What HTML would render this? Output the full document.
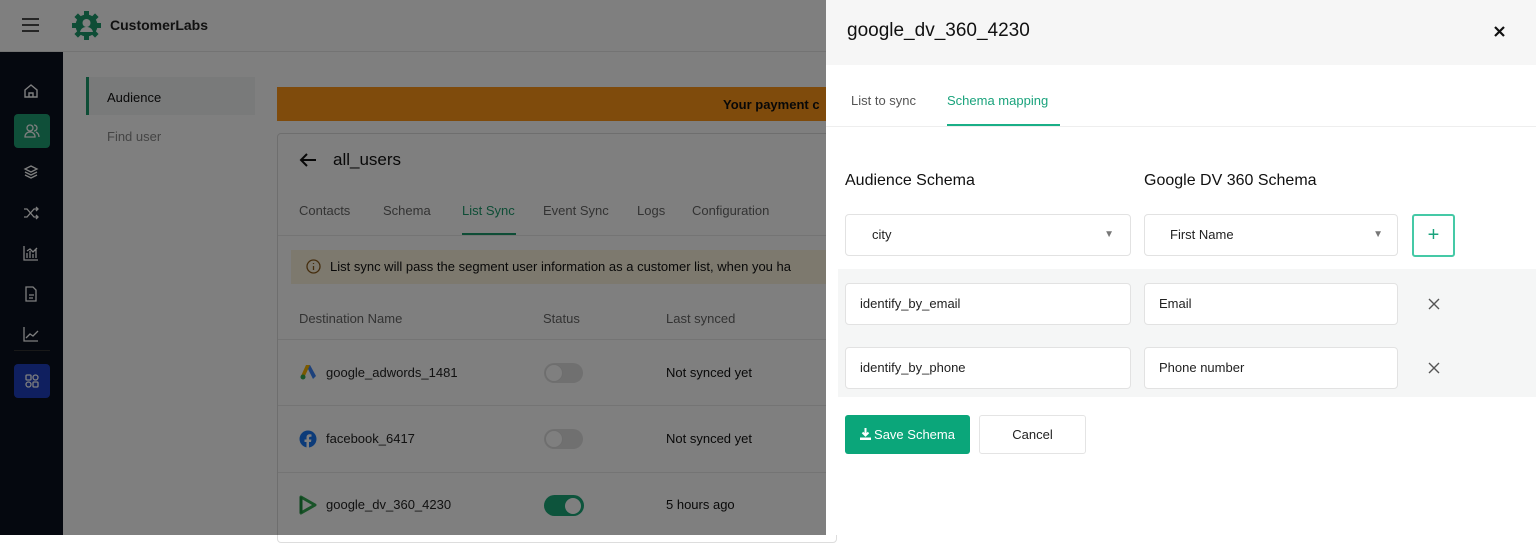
<!DOCTYPE html>
<html><head><meta charset="utf-8">
<style>
*{box-sizing:border-box;margin:0;padding:0}
body{width:1536px;height:535px;overflow:hidden;font-family:"Liberation Sans",sans-serif;background:#fff;position:relative;color:#222}
.abs{position:absolute}
.top{left:0;top:0;width:1536px;height:52px;background:#fff;border-bottom:1px solid #e6e6e6}
.side{left:0;top:52px;width:63px;height:483px;background:#0a101e}
.ico{position:absolute;left:14px;width:36px;height:34px;border-radius:4px;display:flex;align-items:center;justify-content:center}
.main{left:64px;top:52px;width:1472px;height:483px;background:#fff}
.t{position:absolute;white-space:nowrap}
.overlay{left:0;top:0;width:826px;height:535px;background:rgba(0,0,0,.5)}
.drawer{left:826px;top:0;width:710px;height:535px;background:#fff}
.inp{position:absolute;height:42px;background:#fff;border:1px solid #e2e2e2;border-radius:4px;font-size:13px;color:#222;padding-left:14px;line-height:40px}
</style></head><body>
<div class="abs top"></div>
<!-- hamburger -->
<svg class="abs" style="left:22px;top:17px" width="17" height="16"><path d="M0 2h17M0 8h17M0 14h17" stroke="#333" stroke-width="1.8"/></svg>
<svg class="abs" style="left:70px;top:9px" width="33" height="33" viewBox="0 0 33 33"><g fill="#1d9a6c"><circle cx="16.5" cy="16.5" r="11"/><g stroke="#1d9a6c" stroke-width="5"><path d="M16.5 2v29M2 16.5h29M6.2 6.2l20.6 20.6M26.8 6.2L6.2 26.8"/></g></g><circle cx="16.5" cy="14" r="4" fill="#fff"/><path d="M10 23c1-4 4-5 6.5-5s5.5 1 6.5 5z" fill="#fff"/></svg>
<div class="t" style="left:110px;top:17px;font-size:14px;font-weight:bold;color:#222">CustomerLabs</div>

<div class="abs side">
 <svg class="abs" style="left:23px;top:31px" width="16" height="16" viewBox="0 0 16 16" fill="none" stroke="#fff" stroke-width="1.4"><path d="M2 7l6-5 6 5v7H2z M6 14v-4h4v4"/></svg>
 <div class="ico" style="top:62px;background:#1e9e72"><svg width="16" height="16" viewBox="0 0 16 16" fill="none" stroke="#fff" stroke-width="1.3"><circle cx="6" cy="5" r="3"/><path d="M1 14c0-3 2-5 5-5s5 2 5 5z"/><path d="M10 2a3 3 0 010 6M12 9c2 1 3 3 3 5"/></svg></div>
 <svg class="abs" style="left:23px;top:112px" width="16" height="16" viewBox="0 0 16 16" fill="none" stroke="#fff" stroke-width="1.3"><path d="M8 2l6 3-6 3-6-3z M2 8l6 3 6-3 M2 11l6 3 6-3"/></svg>
 <svg class="abs" style="left:23px;top:153px" width="16" height="16" viewBox="0 0 16 16" fill="none" stroke="#fff" stroke-width="1.3"><path d="M1 4h3l7 8h4M1 12h3l7-8h4M13 2l2 2-2 2M13 10l2 2-2 2"/></svg>
 <svg class="abs" style="left:23px;top:193px" width="16" height="16" viewBox="0 0 16 16" fill="none" stroke="#fff" stroke-width="1.3"><path d="M1 1v14h14M4 13V8M7 13V6M10 13V9M13 13V4M4 6l3-2 3 3 4-4"/></svg>
 <svg class="abs" style="left:23px;top:234px" width="16" height="16" viewBox="0 0 16 16" fill="none" stroke="#fff" stroke-width="1.3"><path d="M3 1h7l3 3v11H3z M6 9h5M6 12h4"/></svg>
 <svg class="abs" style="left:23px;top:274px" width="16" height="16" viewBox="0 0 16 16" fill="none" stroke="#fff" stroke-width="1.3"><path d="M1 1v14h14M3 12l4-4 3 2 5-5"/></svg>
 <div class="abs" style="left:14px;top:298px;width:36px;height:1px;background:#333"></div>
 <div class="ico" style="top:312px;background:#1f3fbf"><svg width="16" height="16" viewBox="0 0 16 16" fill="none" stroke="#fff" stroke-width="1.3"><rect x="2" y="2" width="5" height="5" rx="1"/><rect x="9" y="2" width="5" height="5" rx="2.5"/><rect x="2" y="9" width="5" height="5" rx="2.5"/><rect x="9" y="9" width="5" height="5" rx="1"/></svg></div>
</div>

<div class="abs main"></div>
<div class="abs" style="left:86px;top:77px;width:169px;height:38px;background:#f2f4f5;border-left:3px solid #1d9a6c"></div>
<div class="t" style="left:107px;top:90px;font-size:13px;color:#111">Audience</div>
<div class="t" style="left:107px;top:129px;font-size:13px;color:#888">Find user</div>
<div class="abs" style="left:277px;top:87px;width:560px;height:34px;background:#fe9619"></div>
<div class="t" style="left:723px;top:97px;font-size:13px;font-weight:bold;color:#111">Your payment c</div>
<div class="abs" style="left:277px;top:133px;width:560px;height:410px;background:#fff;border:1px solid #ddd;border-radius:4px"></div>
<svg class="abs" style="left:299px;top:152px" width="18" height="16" viewBox="0 0 18 16" fill="none" stroke="#111" stroke-width="2"><path d="M17 8H2M8 2L2 8l6 6"/></svg>
<div class="t" style="left:333px;top:150px;font-size:17px;color:#111">all_users</div>
<div class="t" style="left:299px;top:203px;font-size:13px;color:#666">Contacts</div>
<div class="t" style="left:383px;top:203px;font-size:13px;color:#666">Schema</div>
<div class="t" style="left:462px;top:203px;font-size:13px;color:#1d9a6c">List Sync</div>
<div class="t" style="left:543px;top:203px;font-size:13px;color:#666">Event Sync</div>
<div class="t" style="left:637px;top:203px;font-size:13px;color:#666">Logs</div>
<div class="t" style="left:692px;top:203px;font-size:13px;color:#666">Configuration</div>
<div class="abs" style="left:462px;top:233px;width:54px;height:3px;background:#1d9a6c"></div>
<div class="abs" style="left:278px;top:235px;width:560px;height:1px;background:#e8e8e8"></div>
<div class="abs" style="left:291px;top:250px;width:546px;height:34px;background:#fbf3dd"></div>
<svg class="abs" style="left:306px;top:259px" width="15" height="15" viewBox="0 0 15 15" fill="none" stroke="#8a5a1a" stroke-width="1.3"><circle cx="7.5" cy="7.5" r="6.5"/><path d="M7.5 7v4M7.5 4v1"/></svg>
<div class="t" style="left:330px;top:259px;font-size:13px;color:#111">List sync will pass the segment user information as a customer list, when you ha</div>
<div class="t" style="left:299px;top:311px;font-size:13px;color:#666">Destination Name</div>
<div class="t" style="left:543px;top:311px;font-size:13px;color:#666">Status</div>
<div class="t" style="left:666px;top:311px;font-size:13px;color:#666">Last synced</div>
<div class="abs" style="left:278px;top:339px;width:560px;height:1px;background:#e8e8e8"></div>
<div class="abs" style="left:278px;top:405px;width:560px;height:1px;background:#e8e8e8"></div>
<div class="abs" style="left:278px;top:472px;width:560px;height:1px;background:#e8e8e8"></div>
<svg class="abs" style="left:299px;top:364px" width="18" height="16" viewBox="0 0 18 16"><path d="M7 1h4l6 11-3 3z" fill="#3b82f6"/><path d="M7 1l4 0-6 13-3-2z" fill="#f6b400"/><circle cx="4" cy="13" r="2.5" fill="#34a853"/></svg>
<div class="t" style="left:326px;top:365px;font-size:13px;color:#222">google_adwords_1481</div>
<svg class="abs" style="left:299px;top:430px" width="18" height="18" viewBox="0 0 18 18"><circle cx="9" cy="9" r="8.5" fill="#1877f2"/><path d="M10 18v-6h2l.4-2.5H10V8c0-.7.3-1.3 1.4-1.3h1.1V4.5S11.5 4.3 10.6 4.3C8.7 4.3 7.5 5.4 7.5 7.6v1.9H5.5V12h2v6z" fill="#fff"/></svg>
<div class="t" style="left:326px;top:431px;font-size:13px;color:#222">facebook_6417</div>
<svg class="abs" style="left:299px;top:495px" width="18" height="20" viewBox="0 0 18 20"><path d="M2 2l14 8-14 8z" fill="none" stroke="#34a853" stroke-width="3" stroke-linejoin="round"/><path d="M2 2v16" stroke="#1e8e3e" stroke-width="3"/></svg>
<div class="t" style="left:326px;top:497px;font-size:13px;color:#222">google_dv_360_4230</div>
<div class="abs" style="left:544px;top:363px;width:39px;height:20px;border-radius:10px;background:#e0e0e0"></div>
<div class="abs" style="left:545px;top:364px;width:18px;height:18px;border-radius:9px;background:#fff;border:1px solid #ddd"></div>
<div class="abs" style="left:544px;top:429px;width:39px;height:20px;border-radius:10px;background:#e0e0e0"></div>
<div class="abs" style="left:545px;top:430px;width:18px;height:18px;border-radius:9px;background:#fff;border:1px solid #ddd"></div>
<div class="abs" style="left:544px;top:495px;width:40px;height:21px;border-radius:11px;background:#1aa878"></div>
<div class="abs" style="left:565px;top:498px;width:16px;height:16px;border-radius:8px;background:#fff"></div>
<div class="t" style="left:666px;top:365px;font-size:13px;color:#111">Not synced yet</div>
<div class="t" style="left:666px;top:431px;font-size:13px;color:#111">Not synced yet</div>
<div class="t" style="left:666px;top:497px;font-size:13px;color:#111">5 hours ago</div>

<div class="abs overlay"></div>

<div class="abs drawer">
 <div class="abs" style="left:0;top:0;width:710px;height:65px;background:#f6f6f6"></div>
 <div class="t" style="left:21px;top:20px;font-size:19px;color:#111">google_dv_360_4230</div>
 <svg class="abs" style="left:668px;top:26px" width="11" height="11" viewBox="0 0 11 11"><path d="M1 1l9 9M10 1l-9 9" stroke="#111" stroke-width="2.2"/></svg>
 <div class="t" style="left:25px;top:93px;font-size:13px;color:#555">List to sync</div>
 <div class="t" style="left:121px;top:93px;font-size:13px;color:#1aa37c">Schema mapping</div>
 <div class="abs" style="left:121px;top:124px;width:113px;height:3px;background:#1aaf87"></div>
 <div class="abs" style="left:0;top:126px;width:710px;height:1px;background:#eee"></div>
 <div class="t" style="left:19px;top:172px;font-size:16px;color:#111">Audience Schema</div>
 <div class="t" style="left:318px;top:172px;font-size:16px;color:#111">Google DV 360 Schema</div>
 <div class="inp" style="left:19px;top:214px;width:286px;padding-left:26px">city<span style="position:absolute;right:16px;top:0;font-size:10px;color:#777">&#9660;</span></div>
 <div class="inp" style="left:318px;top:214px;width:254px;padding-left:25px">First Name<span style="position:absolute;right:14px;top:0;font-size:10px;color:#777">&#9660;</span></div>
 <div class="abs" style="left:586px;top:214px;width:43px;height:43px;border:2px solid #45c9a6;border-radius:3px;color:#1aa37c;font-size:20px;text-align:center;line-height:38px">+</div>
 <div class="abs" style="left:12px;top:269px;width:698px;height:128px;background:#f5f6f6"></div>
 <div class="inp" style="left:19px;top:283px;width:286px">identify_by_email</div>
 <div class="inp" style="left:318px;top:283px;width:254px">Email</div>
 <svg class="abs" style="left:602px;top:298px" width="12" height="12" viewBox="0 0 12 12"><path d="M1 1l10 10M11 1L1 11" stroke="#555" stroke-width="1.4"/></svg>
 <div class="inp" style="left:19px;top:347px;width:286px">identify_by_phone</div>
 <div class="inp" style="left:318px;top:347px;width:254px">Phone number</div>
 <svg class="abs" style="left:602px;top:362px" width="12" height="12" viewBox="0 0 12 12"><path d="M1 1l10 10M11 1L1 11" stroke="#555" stroke-width="1.4"/></svg>
 <div class="abs" style="left:19px;top:415px;width:125px;height:39px;background:#0ba67a;border-radius:3px;color:#fff;font-size:13px;line-height:39px;text-align:center"><svg width="11" height="12" viewBox="0 0 11 12" style="vertical-align:-1px;margin-right:3px"><path d="M5.5 0v7M2.5 4.5l3 3 3-3" stroke="#fff" stroke-width="2" fill="none"/><rect x="0" y="9.5" width="11" height="2.5" fill="#fff"/></svg>Save Schema</div>
 <div class="abs" style="left:153px;top:415px;width:107px;height:39px;background:#fff;border:1px solid #e4e4e4;border-radius:3px;color:#222;font-size:13px;line-height:37px;text-align:center">Cancel</div>
</div>
</body></html>
